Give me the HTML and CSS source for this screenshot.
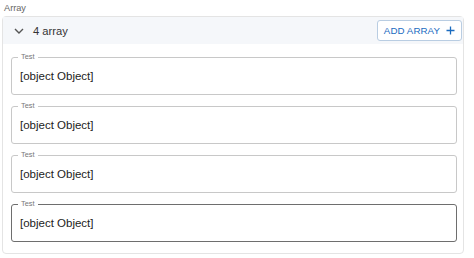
FILE: index.html
```html
<!DOCTYPE html>
<html lang="en">
<head>
    <meta charset="UTF-8">
    <meta name="viewport" content="width=device-width, initial-scale=1.0">
    <title>Array</title>
    <link rel="stylesheet" href="styles.css">
</head>
<body>
    <div class="array-label">Array</div>
    <div class="panel">
        <div class="panel-head">
            <svg class="chevron" width="10" height="6" viewBox="0 0 10 6">
                <polyline points="1,1 5,5 9,1" fill="none" stroke="#555" stroke-width="1.4"/>
            </svg>
            <span class="count">4 array</span>
            <button class="add-btn">
                ADD ARRAY
                <svg width="9" height="9" viewBox="0 0 9 9">
                    <path d="M4.5 0.5v8M0.5 4.5h8" stroke="#1a6bbf" stroke-width="1.3"/>
                </svg>
            </button>
        </div>
        <div class="items">
            <div class="field">
                <span class="field-label">Test</span>
                <span class="field-value">[object Object]</span>
            </div>
            <div class="field">
                <span class="field-label">Test</span>
                <span class="field-value">[object Object]</span>
            </div>
            <div class="field">
                <span class="field-label">Test</span>
                <span class="field-value">[object Object]</span>
            </div>
            <div class="field hover">
                <span class="field-label">Test</span>
                <span class="field-value">[object Object]</span>
            </div>
        </div>
    </div>
</body>
</html>
```

FILE: styles.css
```css
*{
    margin: 0;
    padding: 0;
    box-sizing: border-box;
    font-family: 'Liberation Sans', Arial, sans-serif;
}

body {
    background: #fff;
    width: 474px;
    height: 258px;
    overflow: hidden;
}

.array-label {
    font-size: 9.2px;
    line-height: 16px;
    color: #666;
    padding-left: 4px;
}

.panel {
    margin: 0 10px 0 2px;
    border: 1px solid #e4e4e4;
    border-radius: 4px;
}

.panel-head {
    height: 27px;
    background: #f5f7fa;
    display: flex;
    align-items: center;
    padding: 0 1px 0 11px;
}

.chevron {
    display: block;
}

.count {
    margin-left: 9px;
    font-size: 11.2px;
    color: #333;
    flex: 1;
}

.add-btn {
    height: 21px;
    display: flex;
    align-items: center;
    gap: 6px;
    padding: 0 6px 0 6px;
    background: #fff;
    border: 1px solid #b9cde2;
    border-radius: 3px;
    color: #1a6bbf;
    font-size: 9.7px;
    letter-spacing: 0.1px;
    cursor: pointer;
}

.items {
    display: flex;
    flex-direction: column;
    gap: 11px;
    padding: 13px 6px 11px 8px;
}

.field {
    position: relative;
    height: 38px;
    border: 1px solid #c8c8c8;
    border-radius: 3px;
    display: flex;
    align-items: center;
    padding-left: 8px;
}

.field.hover {
    border-color: #6e6e6e;
}

.field-label {
    position: absolute;
    top: -5px;
    left: 6px;
    padding: 0 3px;
    background: #fff;
    font-size: 7.4px;
    line-height: 8px;
    color: #777;
}

.field-value {
    font-size: 11.5px;
    color: #222;
}
```
